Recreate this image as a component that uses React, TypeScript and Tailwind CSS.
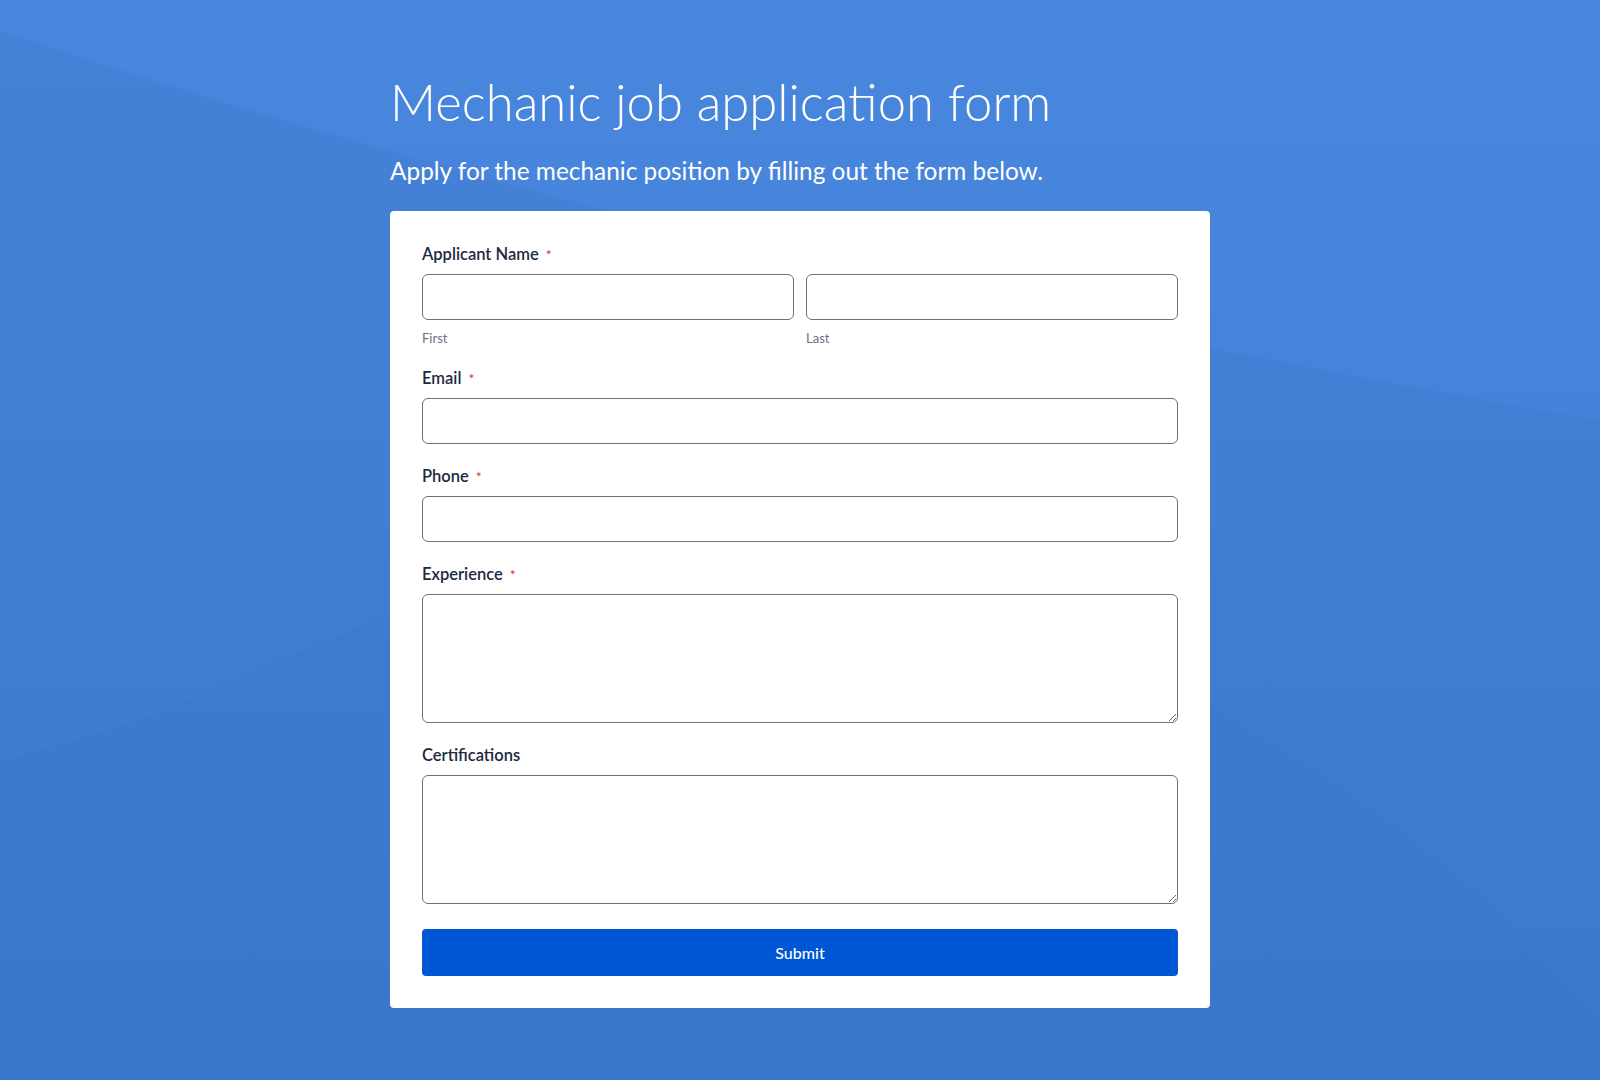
import React from 'react';

const fontStack = { fontFamily: 'Lato, "Noto Sans", sans-serif' };

function Background() {
  return (
    <svg
      className="absolute inset-0 h-full w-full"
      viewBox="0 0 1600 1080"
      preserveAspectRatio="none"
      aria-hidden="true"
    >
      <defs>
        <linearGradient id="bg" x1="0" y1="0" x2="0" y2="1">
          <stop offset="0" stopColor="#4986dd" />
          <stop offset="1" stopColor="#3f7cd3" />
        </linearGradient>
      </defs>
      <rect width="1600" height="1080" fill="url(#bg)" />
      <path d="M0,31 C420,170 900,300 1600,420 L1600,1080 L0,1080 Z" fill="#2f64b8" opacity="0.12" />
      <path d="M700,500 C1000,560 1380,760 1600,1020 L1600,1080 L0,1080 L0,760 C250,700 500,540 700,500 Z" fill="#2f64b8" opacity="0.07" />
    </svg>
  );
}

function Label({ text, required }: { text: string; required?: boolean }) {
  return (
    <label className="flex h-5 items-center text-[16.5px] font-semibold leading-5 text-[#1c2940]">
      {text}
      {required && <span className="ml-[7px] mt-[2px] text-[14px] leading-none font-normal text-[#d8352a]">*</span>}
    </label>
  );
}

const inputCls =
  'mt-2.5 block h-[46px] w-full rounded-[6px] border border-[#6b707c] bg-white px-3 text-[16px] outline-none';
const areaCls =
  'mt-2.5 block h-[129px] w-full rounded-[6px] border border-[#6b707c] bg-white px-3 py-2 text-[16px] outline-none';

export default function App() {
  return (
    <div className="relative min-h-screen w-full overflow-hidden" style={fontStack}>
      <Background />
      <div className="relative mx-auto w-[820px] pt-[72px] pb-[73px]">
        <h1 className="text-[50.8px] font-light leading-[60px] text-white">
          Mechanic job application form
        </h1>
        <p className="mt-6 text-[24.4px] font-normal leading-[29px] text-white">
          Apply for the mechanic position by filling out the form below.
        </p>

        <form className="mt-[26px] flex flex-col gap-[22px] rounded-[4px] bg-white px-8 pt-[33px] pb-8" onSubmit={(e) => e.preventDefault()}>
          <div>
            <Label text="Applicant Name" required />
            <div className="grid grid-cols-2 gap-3">
              <div>
                <input className={inputCls} />
                <div className="mt-2.5 text-[13px] leading-4 text-[#6b7280]">First</div>
              </div>
              <div>
                <input className={inputCls} />
                <div className="mt-2.5 text-[13px] leading-4 text-[#6b7280]">Last</div>
              </div>
            </div>
          </div>

          <div>
            <Label text="Email" required />
            <input className={inputCls} type="email" />
          </div>

          <div>
            <Label text="Phone" required />
            <input className={inputCls} type="tel" />
          </div>

          <div>
            <Label text="Experience" required />
            <textarea className={areaCls} />
          </div>

          <div>
            <Label text="Certifications" />
            <textarea className={areaCls} />
          </div>

          <button
            type="submit"
            className="mt-[3px] h-[47px] w-full rounded-[4px] bg-[#0057d5] text-[16px] font-medium text-white"
          >
            Submit
          </button>
        </form>
      </div>
    </div>
  );
}
